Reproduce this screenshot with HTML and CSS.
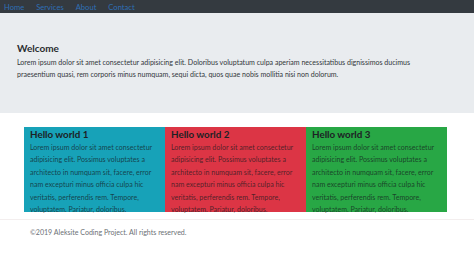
FILE: index.html
```html
<!DOCTYPE html>
<html lang="en">
<head>
  <meta charset="UTF-8">
  <meta name="viewport" content="width=device-width, initial-scale=1.0">
  <title>Aleksite Coding Project</title>
  <link rel="stylesheet" href="styles.css">
</head>
<body>
  <nav class="navbar">
    <a href="#">Home</a>
    <a href="#">Services</a>
    <a href="#">About</a>
    <a href="#">Contact</a>
  </nav>

  <section class="jumbotron">
    <h1>Welcome</h1>
    <p>Lorem ipsum dolor sit amet consectetur adipisicing elit. Doloribus voluptatum culpa aperiam necessitatibus dignissimos ducimus praesentium quasi, rem corporis minus numquam, sequi dicta, quos quae nobis mollitia nisi non dolorum.</p>
  </section>

  <div class="boxes">
    <div class="box box-info">
      <h2>Hello world 1</h2>
      <p>Lorem ipsum dolor sit amet consectetur adipisicing elit. Possimus voluptates a architecto in numquam sit, facere, error nam excepturi minus officia culpa hic veritatis, perferendis rem. Tempore, voluptatem. Pariatur, doloribus.</p>
    </div>
    <div class="box box-danger">
      <h2>Hello world 2</h2>
      <p>Lorem ipsum dolor sit amet consectetur adipisicing elit. Possimus voluptates a architecto in numquam sit, facere, error nam excepturi minus officia culpa hic veritatis, perferendis rem. Tempore, voluptatem. Pariatur, doloribus.</p>
    </div>
    <div class="box box-success">
      <h2>Hello world 3</h2>
      <p>Lorem ipsum dolor sit amet consectetur adipisicing elit. Possimus voluptates a architecto in numquam sit, facere, error nam excepturi minus officia culpa hic veritatis, perferendis rem. Tempore, voluptatem. Pariatur, doloribus.</p>
    </div>
  </div>

  <footer class="footer">
    <p>&copy;2019 Aleksite Coding Project. All rights reserved.</p>
  </footer>
</body>
</html>
```

FILE: styles.css
```css
/* page */
body {
  margin: 0;
  font-family: Lato, "Open Sans", sans-serif;
  font-size: 7.05px;
  color: #212529;
  background-color: #fff;
}

/* navbar */
.navbar {
  display: flex;
  gap: 12px;
  height: 13px;
  align-items: center;
  padding-left: 4px;
  background-color: #343a40;
}

.navbar a {
  color: #2f6fb5;
  text-decoration: none;
  font-size: 7.6px;
}

/* jumbotron */
.jumbotron {
  background-color: #e9ecef;
  height: 100px;
  box-sizing: border-box;
  padding: 29px 40px 0 17px;
}

.jumbotron h1 {
  margin: 0 0 3px;
  font-size: 10px;
  font-weight: 700;
  color: #2a2d30;
}

.jumbotron p {
  margin: 0;
  line-height: 12px;
  color: #33373b;
}

/* boxes */
.boxes {
  display: flex;
  margin: 14px 27px 0 24px;
}

.box {
  flex: 1;
  padding: 1px 6px 2px;
  height: 85px;
  box-sizing: border-box;
}

.box h2 {
  margin: 0 0 2px;
  font-size: 9.8px;
  font-weight: 700;
  color: #1d2124;
}

.box p {
  margin: 0;
  line-height: 12.4px;
  color: rgba(20, 24, 28, 0.72);
}

.box-info {
  background-color: #17a2b8;
}

.box-danger {
  background-color: #dc3545;
}

.box-success {
  background-color: #28a745;
}

/* footer */
.footer {
  margin-top: 7px;
  border-top: 1px solid #f3eeee;
  padding: 8px 30px;
}

.footer p {
  margin: 0;
  color: #6c7075;
}
```
